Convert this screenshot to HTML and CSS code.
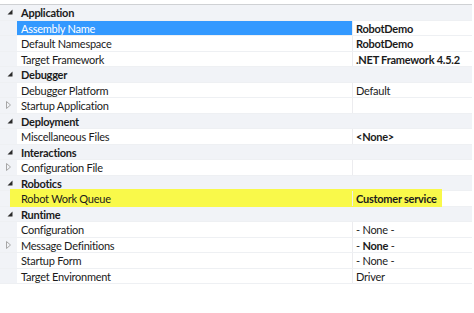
FILE: index.html
```html
<!DOCTYPE html>
<html>
<head>
<meta charset="utf-8">
<link rel="stylesheet" href="styles.css">
</head>
<body>
<div class="grid">
  <div class="row cat"><span class="gut"><svg class="exp" width="6" height="6" viewBox="0 0 6 6"><path d="M5.5 0.5 V5.5 H0.5 Z"/></svg></span><span class="name">Application</span></div>
  <div class="row sel"><span class="gut"></span><span class="name">Assembly Name</span><span class="val b">RobotDemo</span></div>
  <div class="row"><span class="gut"></span><span class="name">Default Namespace</span><span class="val b">RobotDemo</span></div>
  <div class="row"><span class="gut"></span><span class="name">Target Framework</span><span class="val b">.NET Framework 4.5.2</span></div>
  <div class="row cat"><span class="gut"><svg class="exp" width="6" height="6" viewBox="0 0 6 6"><path d="M5.5 0.5 V5.5 H0.5 Z"/></svg></span><span class="name">Debugger</span></div>
  <div class="row"><span class="gut"></span><span class="name">Debugger Platform</span><span class="val">Default</span></div>
  <div class="row"><span class="gut"><svg class="col" width="5" height="8" viewBox="0 0 5 8"><path d="M0.5 0.5 L4.5 4 L0.5 7.5 Z"/></svg></span><span class="name">Startup Application</span><span class="val"></span></div>
  <div class="row cat"><span class="gut"><svg class="exp" width="6" height="6" viewBox="0 0 6 6"><path d="M5.5 0.5 V5.5 H0.5 Z"/></svg></span><span class="name">Deployment</span></div>
  <div class="row"><span class="gut"></span><span class="name">Miscellaneous Files</span><span class="val b">&lt;None&gt;</span></div>
  <div class="row cat"><span class="gut"><svg class="exp" width="6" height="6" viewBox="0 0 6 6"><path d="M5.5 0.5 V5.5 H0.5 Z"/></svg></span><span class="name">Interactions</span></div>
  <div class="row"><span class="gut"><svg class="col" width="5" height="8" viewBox="0 0 5 8"><path d="M0.5 0.5 L4.5 4 L0.5 7.5 Z"/></svg></span><span class="name">Configuration File</span><span class="val"></span></div>
  <div class="row cat"><span class="gut"><svg class="exp" width="6" height="6" viewBox="0 0 6 6"><path d="M5.5 0.5 V5.5 H0.5 Z"/></svg></span><span class="name">Robotics</span></div>
  <div class="row"><span class="gut"></span><span class="name">Robot Work Queue</span><span class="val b">Customer service</span><span class="marker"></span></div>
  <div class="row cat"><span class="gut"><svg class="exp" width="6" height="6" viewBox="0 0 6 6"><path d="M5.5 0.5 V5.5 H0.5 Z"/></svg></span><span class="name">Runtime</span></div>
  <div class="row"><span class="gut"></span><span class="name">Configuration</span><span class="val">- None -</span></div>
  <div class="row"><span class="gut"><svg class="col" width="5" height="8" viewBox="0 0 5 8"><path d="M0.5 0.5 L4.5 4 L0.5 7.5 Z"/></svg></span><span class="name">Message Definitions</span><span class="val">- <b>None</b> -</span></div>
  <div class="row"><span class="gut"></span><span class="name">Startup Form</span><span class="val">- None -</span></div>
  <div class="row"><span class="gut"></span><span class="name">Target Environment</span><span class="val">Driver</span></div>
</div>
</body>
</html>
```
FILE: styles.css
```css
html, body { margin: 0; padding: 0; background: #fff; }
body {
  font-family: "Lato", "Open Sans", sans-serif;
  font-size: 11px;
  letter-spacing: -0.25px;
  color: #1b1b1b;
}
.grid {
  margin-top: 4px;
  width: 472px;
  border-top: 1px solid #cfd1d4;
}
.row {
  position: relative;
  display: flex;
  height: 15.5px;
  line-height: 15.5px;
  box-sizing: border-box;
  border-bottom: 1px solid #eef0f3;
  background: #fff;
}
.gut {
  width: 17px;
  flex: none;
  background: #f1f3f7;
  display: flex;
  align-items: center;
  padding-left: 6px;
  box-sizing: border-box;
}
.name {
  width: 335px;
  flex: none;
  padding-left: 4px;
  box-sizing: border-box;
  white-space: nowrap;
  overflow: hidden;
  position: relative;
  z-index: 1;
}
.val {
  flex: 1;
  border-left: 1px solid #ececef;
  padding-left: 3px;
  white-space: nowrap;
  position: relative;
  z-index: 1;
}
.b, .val b { font-weight: 700; }
.cat { background: #f1f3f7; }
.cat .name { font-weight: 700; }
.sel .name { background: #3399ff; color: #fff; }
.exp path { fill: #2a2a2a; }
.exp { margin-left: 1px; }
.col path { fill: none; stroke: #a6a6a6; stroke-width: 1; }
.marker {
  position: absolute;
  left: 10px;
  top: -2px;
  width: 432px;
  height: 18px;
  background: #f9f94a;
  z-index: 0;
}
```
